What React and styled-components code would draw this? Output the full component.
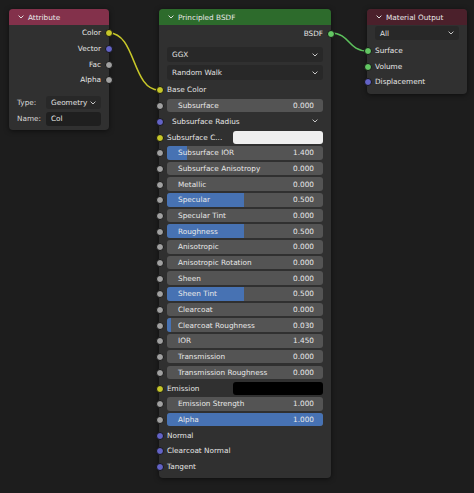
import styled, { createGlobalStyle } from 'styled-components'

const GlobalStyle = createGlobalStyle`
  html, body {
    margin: 0;
    padding: 0;
    background: #1d1d1d;
  }
  body {
    font-family: "DejaVu Sans", "Liberation Sans", sans-serif;
    font-size: 7.3px;
    color: #e6e6e6;
  }
`

const SOCKET = {
  grey: '#a1a1a1',
  yellow: '#c7c729',
  purple: '#6363c7',
  green: '#63c763',
}

const Canvas = styled.div`
  position: relative;
  width: 474px;
  height: 493px;
  overflow: hidden;
  background: #1d1d1d;
`

const Links = styled.svg`
  position: absolute;
  left: 0;
  top: 0;
`

const Node = styled.div`
  position: absolute;
  left: ${p => p.$x}px;
  top: ${p => p.$y}px;
  width: ${p => p.$w}px;
  background: #303030;
  border-radius: 4px;
  box-shadow: 0 1px 5px rgba(0, 0, 0, 0.55);
  padding-bottom: ${p => p.$pb || 4}px;
`

const Header = styled.div`
  height: 16px;
  display: flex;
  align-items: center;
  gap: 4px;
  padding-left: 9px;
  background: ${p => p.$color};
  border-radius: 4px 4px 0 0;
  color: #e8e8e8;
  white-space: nowrap;
`

const Row = styled.div`
  position: relative;
  height: ${p => p.$h || 15.7}px;
  margin-top: ${p => p.$mt || 0}px;
  padding: 0 8px;
  display: flex;
  align-items: center;
  justify-content: ${p => (p.$out ? 'flex-end' : 'flex-start')};
  white-space: nowrap;
`

const Socket = styled.span`
  position: absolute;
  top: 50%;
  ${p => (p.$out ? 'right: -3.5px;' : 'left: -3.5px;')}
  width: 6px;
  height: 6px;
  margin-top: -3.5px;
  border-radius: 50%;
  background: ${p => SOCKET[p.$kind]};
  border: 0.5px solid #151515;
`

const Slider = styled.div`
  position: relative;
  flex: 1;
  height: 13.6px;
  background: #545454;
  border-radius: 3px;
  overflow: hidden;
  display: flex;
  align-items: center;
  justify-content: space-between;
  padding: 0 9px 0 11px;
`

const Fill = styled.div`
  position: absolute;
  left: 0;
  top: 0;
  bottom: 0;
  width: ${p => p.$pct}%;
  background: #4772b3;
`

const SliderText = styled.span`
  position: relative;
  color: #e8e8e8;
`

const Dropdown = styled.div`
  flex: 1;
  height: ${p => p.$h || 15}px;
  background: #282828;
  border-radius: 3px;
  display: flex;
  align-items: center;
  justify-content: space-between;
  padding: 0 5px 0 5px;
  color: #e0e0e0;
`

const Plain = styled.div`
  flex: 1;
  display: flex;
  align-items: center;
  justify-content: space-between;
  padding: 0 5px;
`

const Swatch = styled.div`
  width: 90px;
  height: 13px;
  margin-left: auto;
  border-radius: 3px;
  background: ${p => p.$color};
`

const FieldLabel = styled.span`
  width: 29px;
  flex: none;
  color: #d8d8d8;
`

const TextField = styled.div`
  flex: 1;
  height: 14px;
  background: #1f1f1f;
  border-radius: 3px;
  display: flex;
  align-items: center;
  padding-left: 5px;
`

function Chevron({ color = '#c8c8c8' }) {
  return (
    <svg width="6" height="4" viewBox="0 0 6 4">
      <polyline points="0.6,0.6 3,3 5.4,0.6" fill="none" stroke={color} strokeWidth="1" />
    </svg>
  )
}

const inputs = [
  { label: 'Subsurface', value: '0.000', fill: 0 },
  { label: 'Subsurface Radius', kind: 'purple', type: 'vector' },
  { label: 'Subsurface C...', kind: 'yellow', type: 'color', color: '#efefef' },
  { label: 'Subsurface IOR', value: '1.400', fill: 13 },
  { label: 'Subsurface Anisotropy', value: '0.000', fill: 0 },
  { label: 'Metallic', value: '0.000', fill: 0 },
  { label: 'Specular', value: '0.500', fill: 49.5 },
  { label: 'Specular Tint', value: '0.000', fill: 0 },
  { label: 'Roughness', value: '0.500', fill: 49.5 },
  { label: 'Anisotropic', value: '0.000', fill: 0 },
  { label: 'Anisotropic Rotation', value: '0.000', fill: 0 },
  { label: 'Sheen', value: '0.000', fill: 0 },
  { label: 'Sheen Tint', value: '0.500', fill: 49.5 },
  { label: 'Clearcoat', value: '0.000', fill: 0 },
  { label: 'Clearcoat Roughness', value: '0.030', fill: 2.8 },
  { label: 'IOR', value: '1.450', fill: 0 },
  { label: 'Transmission', value: '0.000', fill: 0 },
  { label: 'Transmission Roughness', value: '0.000', fill: 0 },
  { label: 'Emission', kind: 'yellow', type: 'color', color: '#000000' },
  { label: 'Emission Strength', value: '1.000', fill: 0 },
  { label: 'Alpha', value: '1.000', fill: 100 },
  { label: 'Normal', kind: 'purple', type: 'label' },
  { label: 'Clearcoat Normal', kind: 'purple', type: 'label' },
  { label: 'Tangent', kind: 'purple', type: 'label' },
]

function InputRow({ item }) {
  const kind = item.kind || 'grey'
  let content
  if (item.type === 'label') {
    content = <span>{item.label}</span>
  } else if (item.type === 'color') {
    content = (
      <>
        <span>{item.label}</span>
        <Swatch $color={item.color} />
      </>
    )
  } else if (item.type === 'vector') {
    content = (
      <Plain>
        <span>{item.label}</span>
        <Chevron />
      </Plain>
    )
  } else {
    content = (
      <Slider>
        {item.fill > 0 && <Fill $pct={item.fill} />}
        <SliderText>{item.label}</SliderText>
        <SliderText>{item.value}</SliderText>
      </Slider>
    )
  }
  return (
    <Row>
      <Socket $kind={kind} />
      {content}
    </Row>
  )
}

export default function App() {
  return (
    <>
      <GlobalStyle />
      <Canvas>
        <Links width="474" height="493">
          <path d="M109 33 C 136 33, 132 90, 159 90" fill="none" stroke="#c7c729" strokeWidth="1.6" />
          <path d="M331 33 C 350 33, 348 51, 367 51" fill="none" stroke="#5cbf5c" strokeWidth="1.6" />
        </Links>

        <Node $x={9} $y={9} $w={100} $pb={3}>
          <Header $color="#83314b">
            <Chevron color="#e0e0e0" />
            <span>Attribute</span>
          </Header>
          <Row $out $h={15.7}>
            <span>Color</span>
            <Socket $out $kind="yellow" />
          </Row>
          <Row $out $h={15.7}>
            <span>Vector</span>
            <Socket $out $kind="purple" />
          </Row>
          <Row $out $h={15.7}>
            <span>Fac</span>
            <Socket $out $kind="grey" />
          </Row>
          <Row $out $h={15.7}>
            <span>Alpha</span>
            <Socket $out $kind="grey" />
          </Row>
          <Row $h={16} $mt={7}>
            <FieldLabel>Type:</FieldLabel>
            <Dropdown $h={13}>
              <span>Geometry</span>
              <Chevron />
            </Dropdown>
          </Row>
          <Row $h={16}>
            <FieldLabel>Name:</FieldLabel>
            <TextField>Col</TextField>
          </Row>
        </Node>

        <Node $x={159} $y={9} $w={172} $pb={4}>
          <Header $color="#2d6b2c">
            <Chevron color="#e0e0e0" />
            <span>Principled BSDF</span>
          </Header>
          <Row $out $h={16}>
            <span>BSDF</span>
            <Socket $out $kind="green" />
          </Row>
          <Row $h={18} $mt={4.7}>
            <Dropdown>
              <span>GGX</span>
              <Chevron />
            </Dropdown>
          </Row>
          <Row $h={18}>
            <Dropdown>
              <span>Random Walk</span>
              <Chevron />
            </Dropdown>
          </Row>
          <Row $mt={0.45}>
            <Socket $kind="yellow" />
            <span>Base Color</span>
          </Row>
          {inputs.map(item => (
            <InputRow key={item.label} item={item} />
          ))}
        </Node>

        <Node $x={367} $y={9} $w={100} $pb={4}>
          <Header $color="#4b202b">
            <Chevron color="#e0e0e0" />
            <span>Material Output</span>
          </Header>
          <Row $h={16}>
            <Dropdown $h={13.5}>
              <span>All</span>
              <Chevron />
            </Dropdown>
          </Row>
          <Row $mt={1.7}>
            <Socket $kind="green" />
            <span>Surface</span>
          </Row>
          <Row>
            <Socket $kind="green" />
            <span>Volume</span>
          </Row>
          <Row>
            <Socket $kind="purple" />
            <span>Displacement</span>
          </Row>
        </Node>
      </Canvas>
    </>
  )
}
